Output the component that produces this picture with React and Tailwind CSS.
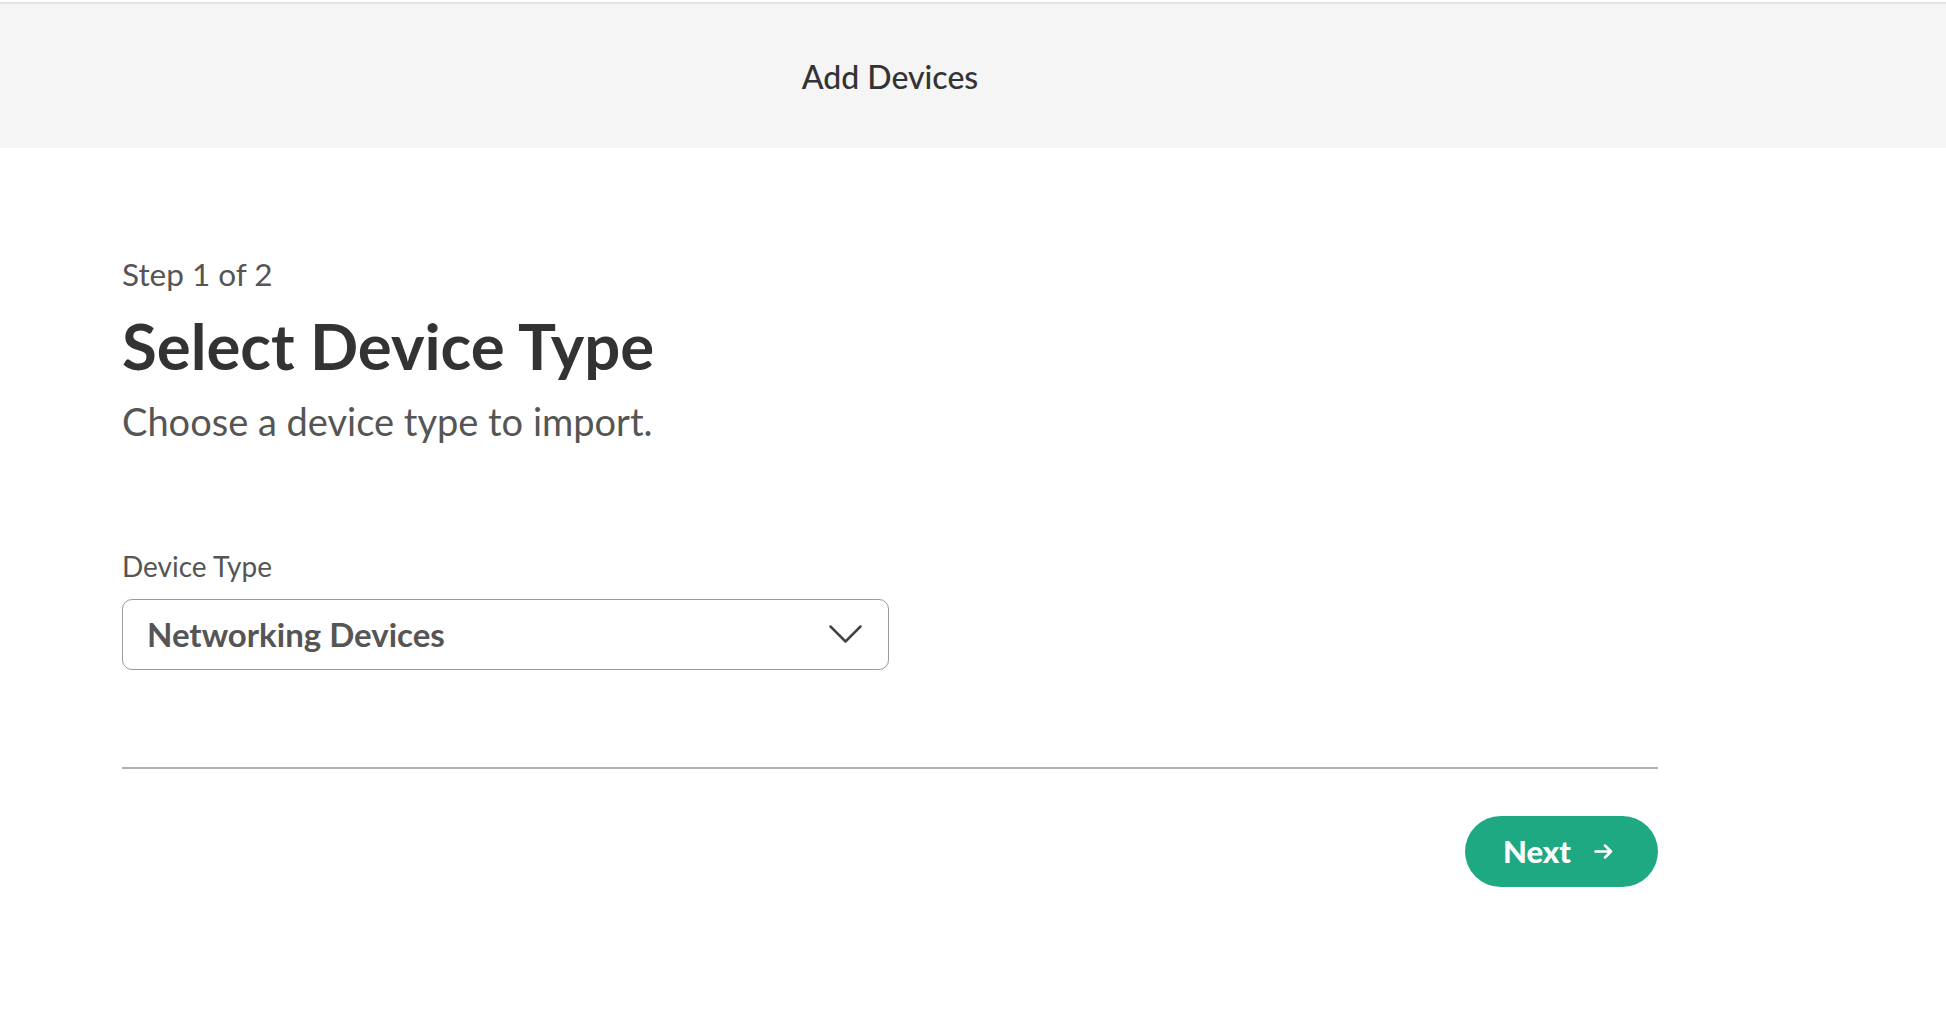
export default function App() {
  const font = { fontFamily: 'Lato, "Noto Sans", sans-serif' };
  return (
    <div className="min-h-screen w-full bg-white" style={font}>
      <div className="pt-[2px] bg-white">
        <div className="border-t-2 border-[#e3e3e3] bg-[#f5f5f5] h-[146px] flex items-center">
          <div className="ml-[122px] w-[1536px] pt-[2px] text-center text-[32px] leading-none font-medium text-[#333333]">
            Add Devices
          </div>
        </div>
      </div>
      <main className="ml-[122px] w-[1536px] flex flex-col">
        <div className="mt-[111px] text-[31.5px] leading-none text-[#555555]">Step 1 of 2</div>
        <h1 className="mt-[23px] text-[63.5px] leading-none font-bold text-[#333333]">Select Device Type</h1>
        <p className="mt-[25px] text-[38px] leading-none text-[#555555]">Choose a device type to import.</p>
        <label className="mt-[112px] text-[28px] leading-none text-[#555555]">Device Type</label>
        <button className="mt-[19px] w-[767px] h-[71px] rounded-[10px] border border-[#9a9a9a] flex items-center justify-between pl-[24px] pr-[26px] text-left">
          <span className="text-[33px] leading-none font-bold text-[#555555]">Networking Devices</span>
          <svg width="33" height="19" viewBox="0 0 33 19" fill="none">
            <path d="M1.5 1.5 L16.5 16.5 L31.5 1.5" stroke="#444444" strokeWidth="2.5" strokeLinecap="round" strokeLinejoin="round" />
          </svg>
        </button>
        <div className="mt-[97px] h-[2px] w-full bg-[#b0b0b0]" />
        <div className="mt-[47px] flex justify-end">
          <button className="h-[71px] w-[193px] rounded-full bg-[#1fa983] flex items-center pl-[38px] gap-[23px] text-white">
            <span className="text-[31px] leading-none font-black">Next</span>
            <svg width="19" height="15" viewBox="0 0 19 15" fill="none">
              <path d="M1.5 7.5 H17 M11 1.5 L17 7.5 L11 13.5" stroke="#ffffff" strokeWidth="2.5" strokeLinecap="round" strokeLinejoin="round" />
            </svg>
          </button>
        </div>
      </main>
    </div>
  );
}
